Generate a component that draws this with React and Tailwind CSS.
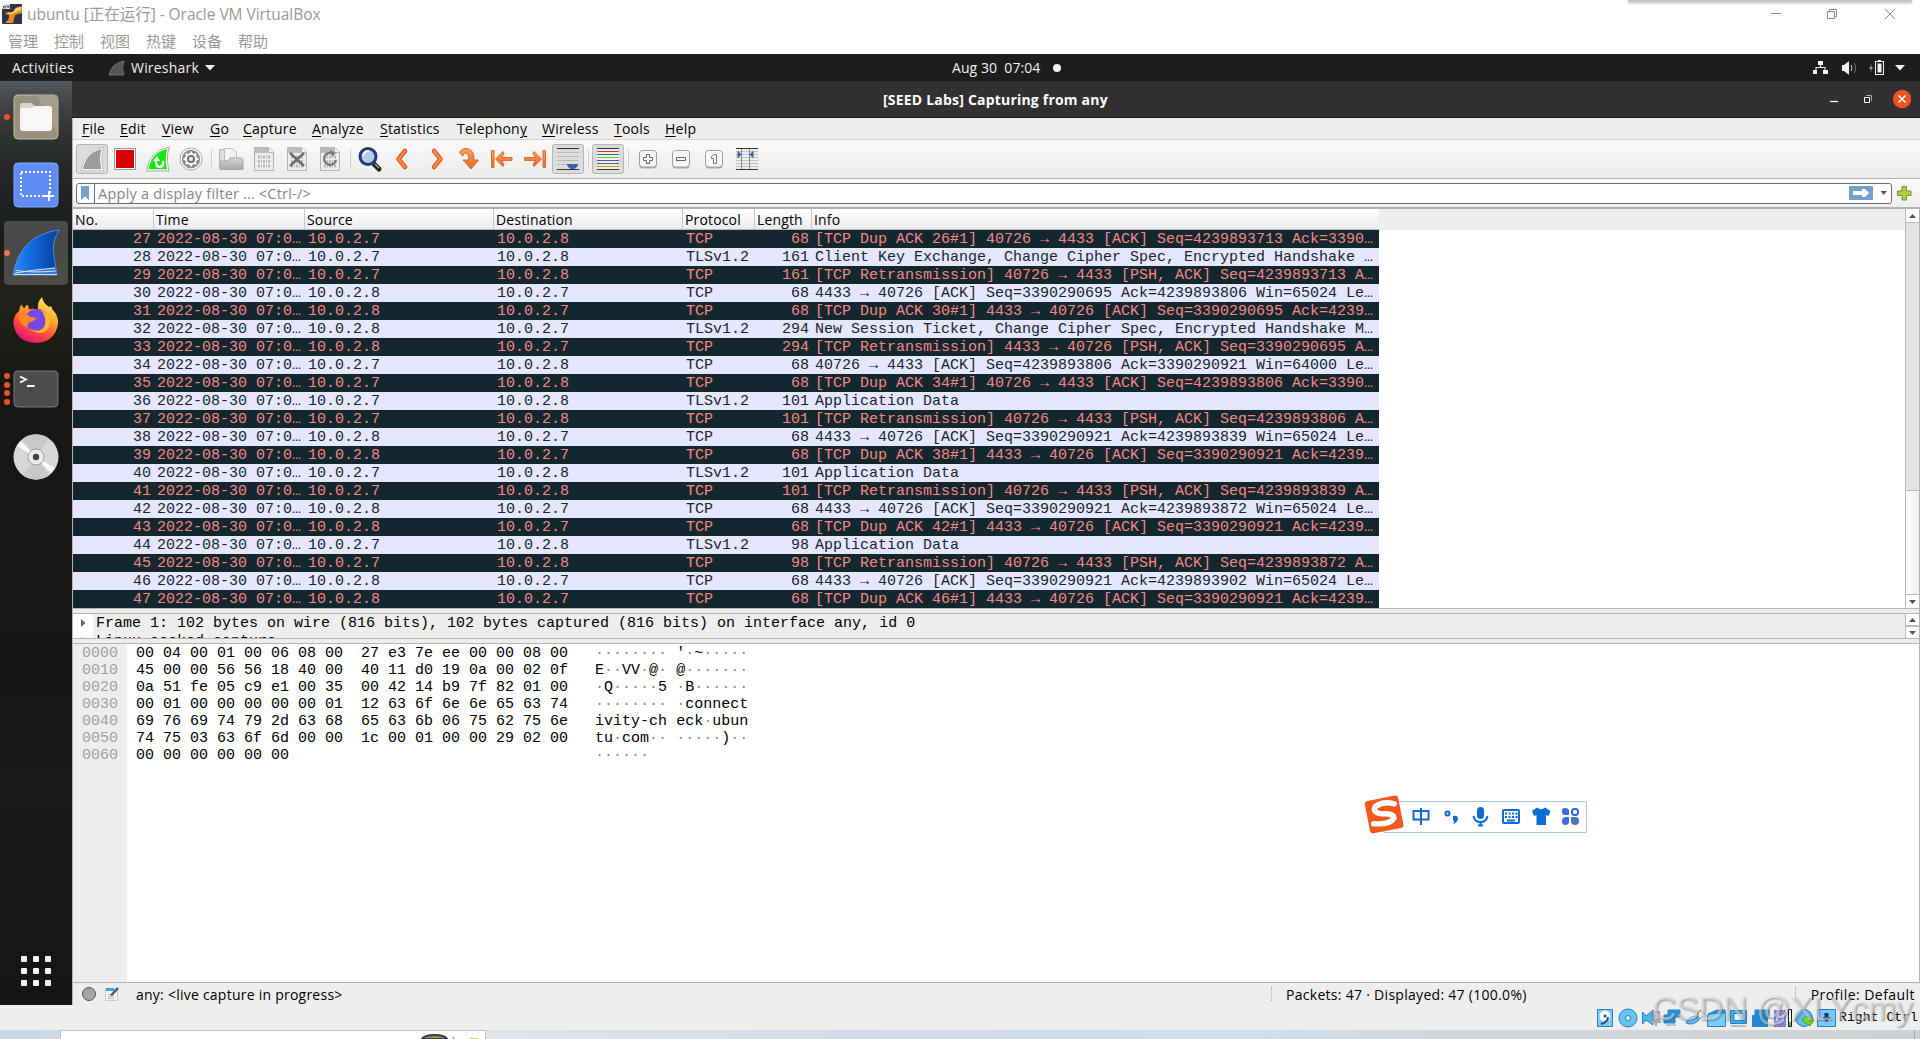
import React from 'react';

const packets = [
  [27, 7, 8, 'TCP', 68, '[TCP Dup ACK 26#1] 40726 → 4433 [ACK] Seq=4239893713 Ack=3390…'],
  [28, 7, 8, 'TLSv1.2', 161, 'Client Key Exchange, Change Cipher Spec, Encrypted Handshake …'],
  [29, 7, 8, 'TCP', 161, '[TCP Retransmission] 40726 → 4433 [PSH, ACK] Seq=4239893713 A…'],
  [30, 8, 7, 'TCP', 68, '4433 → 40726 [ACK] Seq=3390290695 Ack=4239893806 Win=65024 Le…'],
  [31, 8, 7, 'TCP', 68, '[TCP Dup ACK 30#1] 4433 → 40726 [ACK] Seq=3390290695 Ack=4239…'],
  [32, 8, 7, 'TLSv1.2', 294, 'New Session Ticket, Change Cipher Spec, Encrypted Handshake M…'],
  [33, 8, 7, 'TCP', 294, '[TCP Retransmission] 4433 → 40726 [PSH, ACK] Seq=3390290695 A…'],
  [34, 7, 8, 'TCP', 68, '40726 → 4433 [ACK] Seq=4239893806 Ack=3390290921 Win=64000 Le…'],
  [35, 7, 8, 'TCP', 68, '[TCP Dup ACK 34#1] 40726 → 4433 [ACK] Seq=4239893806 Ack=3390…'],
  [36, 7, 8, 'TLSv1.2', 101, 'Application Data'],
  [37, 7, 8, 'TCP', 101, '[TCP Retransmission] 40726 → 4433 [PSH, ACK] Seq=4239893806 A…'],
  [38, 8, 7, 'TCP', 68, '4433 → 40726 [ACK] Seq=3390290921 Ack=4239893839 Win=65024 Le…'],
  [39, 8, 7, 'TCP', 68, '[TCP Dup ACK 38#1] 4433 → 40726 [ACK] Seq=3390290921 Ack=4239…'],
  [40, 7, 8, 'TLSv1.2', 101, 'Application Data'],
  [41, 7, 8, 'TCP', 101, '[TCP Retransmission] 40726 → 4433 [PSH, ACK] Seq=4239893839 A…'],
  [42, 8, 7, 'TCP', 68, '4433 → 40726 [ACK] Seq=3390290921 Ack=4239893872 Win=65024 Le…'],
  [43, 8, 7, 'TCP', 68, '[TCP Dup ACK 42#1] 4433 → 40726 [ACK] Seq=3390290921 Ack=4239…'],
  [44, 7, 8, 'TLSv1.2', 98, 'Application Data'],
  [45, 7, 8, 'TCP', 98, '[TCP Retransmission] 40726 → 4433 [PSH, ACK] Seq=4239893872 A…'],
  [46, 8, 7, 'TCP', 68, '4433 → 40726 [ACK] Seq=3390290921 Ack=4239893902 Win=65024 Le…'],
  [47, 8, 7, 'TCP', 68, '[TCP Dup ACK 46#1] 4433 → 40726 [ACK] Seq=3390290921 Ack=4239…'],
];

const hexRows = [
  ['0000', '00 04 00 01 00 06 08 00  27 e3 7e ee 00 00 08 00', "········ '·~·····"],
  ['0010', '45 00 00 56 56 18 40 00  40 11 d0 19 0a 00 02 0f', 'E··VV·@· @·······'],
  ['0020', '0a 51 fe 05 c9 e1 00 35  00 42 14 b9 7f 82 01 00', '·Q·····5 ·B······'],
  ['0030', '00 01 00 00 00 00 00 01  12 63 6f 6e 6e 65 63 74', '········ ·connect'],
  ['0040', '69 76 69 74 79 2d 63 68  65 63 6b 06 75 62 75 6e', 'ivity-ch eck·ubun'],
  ['0050', '74 75 03 63 6f 6d 00 00  1c 00 01 00 00 29 02 00', 'tu·com·· ·····)··'],
  ['0060', '00 00 00 00 00 00', '······'],
];

// before the mnemonic, mnemonic, after it, slot width
const menus = [
  ['', 'F', 'ile', 'w-[38px]'],
  ['', 'E', 'dit', 'w-[42px]'],
  ['', 'V', 'iew', 'w-[48px]'],
  ['', 'G', 'o', 'w-[33px]'],
  ['', 'C', 'apture', 'w-[69px]'],
  ['', 'A', 'nalyze', 'w-[68px]'],
  ['', 'S', 'tatistics', 'w-[77px]'],
  ['Telephon', 'y', '', 'w-[85px]'],
  ['', 'W', 'ireless', 'w-[72px]'],
  ['', 'T', 'ools', 'w-[51px]'],
  ['', 'H', 'elp', 'w-[40px]'],
];

const ui = "font-['Open_Sans','Noto_Sans',sans-serif]";
const mono = "font-['Liberation_Mono',monospace]";
const cjk = "font-['Open_Sans','Noto_Sans_CJK_SC',sans-serif]";

function HostTitle() {
  return (
    <div className={`relative h-[54px] bg-white text-[#999] ${cjk}`}>
      <div className="absolute left-[1628px] top-0 h-[2px] w-[284px] bg-[#c4c4c4] shadow-[0_1px_3px_#aaa]" />
      <div className="flex h-7 items-center pl-[2px]">
        <svg width="20" height="20" viewBox="0 0 20 20">
          <rect width="20" height="20" rx="1" fill="#2d3446" />
          <path d="M5 8 Q11 10 13 4 L20 2 V9 L13 11 L11 19 H3 Q8 15 7 11 L3 10Z" fill="#f08a1c" />
          <path d="M6 8 Q12 10 14 4 L19 3 V6 L14 8 Q9 12 6 9Z" fill="#ffd27a" />
          <path d="M0 0 H8 V5 H0Z" fill="#e8e8e8" />
          <path d="M1.5 2 V4 H3.500 V2.500 H1.500 M5 1 V3 H7 M7 1 V4" stroke="#444" strokeWidth=".8" fill="none" />
        </svg>
        <span className="ml-[5px] whitespace-pre pt-px text-[15.5px] tracking-[-0.04px]">ubuntu [正在运行] - Oracle VM VirtualBox</span>
        <svg className="ml-auto mr-6" width="126" height="14" viewBox="0 0 126 14" fill="none" stroke="#8a8a8a">
          <path d="M1 6.500 H11" />
          <path d="M57.500 4.500 H64.500 V11.500 H57.500Z M59.500 4.500 V2.500 H66.500 V9.500 H64.500" />
          <path d="M115 2 L125 12 M125 2 L115 12" />
        </svg>
      </div>
      <div className="flex gap-4 pl-2 text-[15px] leading-[27px]">
        {['管理', '控制', '视图', '热键', '设备', '帮助'].map((m) => (
          <span key={m} className="w-[30px]">{m}</span>
        ))}
      </div>
    </div>
  );
}

function TopBar() {
  return (
    <div className={`flex h-[27px] items-center bg-[#1d1d1d] text-[14px] text-[#f0f0f0] ${ui}`}>
      <span className="w-[97px] pl-3 tracking-[0.45px]">Activities</span>
      <svg className="ml-3" width="16" height="16" viewBox="0 0 16 16">
        <path d="M0 15 Q3 3 15 1 Q12 8 15 15Z" fill="#555" stroke="#888" strokeWidth=".7" />
      </svg>
      <span className="ml-[6px] w-[74px] tracking-[0.2px]">Wireshark</span>
      <svg width="10" height="6"><path d="M0 0 H10 L5 5.500Z" fill="#f0f0f0" /></svg>
      <span className="ml-[737px] w-[101px] whitespace-pre tracking-[0.050px]">Aug 30  07:04</span>
      <span className="h-2 w-2 rounded-full bg-[#f0f0f0]" />
      <svg className="ml-auto mr-[14px]" width="94" height="16" viewBox="0 0 94 16" fill="#f0f0f0">
        <path d="M6 1 H11 V5 H9 V7 H13.500 V10 H16 V14 H11 V10 H12.500 V8 H4.500 V10 H5 V14 H1 V10 H3.500 V7 H8 V5 H6Z" />
        <path d="M30 5 H32 L37 1 V15 L32 11 H30Z" />
        <path d="M39 5 Q41 8 39 11" fill="none" stroke="#ccc" />
        <path d="M42 3 Q45.500 8 42 13" fill="none" stroke="#777" />
        <path d="M60 3 L57 9 H59 L58 13 L61 7 H59Z" fill="#999" />
        <path d="M66 0 H69 V1 H72 V15 H63 V1 H66Z M64 2 V14 H71 V2Z" fillRule="evenodd" />
        <path d="M65.500 3.500 H69.500 V12.500 H65.500Z" />
        <path d="M83 5 H93 L88 10.500Z" />
      </svg>
    </div>
  );
}

function DockItem({ dots = 0, active, children }) {
  return (
    <div className="flex h-[68px] w-[72px] items-center">
      <div className="flex w-1 flex-col gap-[2.800px] pl-1">
        {Array.from({ length: dots }, (_, i) => (
          <span key={i} className="h-[6px] w-[6px] shrink-0 rounded-full bg-[#e95420]" />
        ))}
      </div>
      <div className={`flex h-16 w-16 items-center justify-center rounded ${active ? 'bg-white/20' : ''}`}>{children}</div>
    </div>
  );
}

function Dock() {
  return (
    <div className="flex w-[72px] flex-col bg-[linear-gradient(180deg,#55585b_0px,#3c3f40_30px,#2c302e_60px,#1e2226_115px,#1a1d1a_160px,#20221a_220px,#171815_300px,#151515_600px,#1a1918_700px,#151515_924px)] pt-[2px]">
      <DockItem dots={1}>
        <svg width="46" height="46" viewBox="0 0 46 46">
          <rect x="1" y="1" width="44" height="44" rx="4" fill="#99907c" stroke="#c9c2b2" />
          <path d="M24 1 H41 Q45 1 45 5 V41Z" fill="#a69e8a" />
          <path d="M7 11 Q7 9 9 9 H18 L22 12 H36 Q39 12 39 15 V20 H7Z" fill="#d8d4ca" />
          <path d="M7 17 Q7 14 10 14 H18 L22 12 H36 Q39 12 39 15 V34 Q39 37 36 37 H10 Q7 37 7 34Z" fill="#f8f7f5" />
        </svg>
      </DockItem>
      <DockItem>
        <svg width="46" height="46" viewBox="0 0 46 46">
          <rect x="1" y="1" width="44" height="44" rx="4" fill="#5f8df5" stroke="#83a8fa" />
          <path d="M8 10 H37 V31 M31 34 H8 V10" fill="none" stroke="#fff" strokeWidth="2" strokeDasharray="2 2" />
          <path d="M31 34 H41 M36 29 V39" stroke="#fff" strokeWidth="2" />
        </svg>
      </DockItem>
      <DockItem dots={1} active>
        <svg width="48" height="48" viewBox="0 0 48 48">
          <defs>
            <linearGradient id="fin" x1="0" y1="0" x2="1" y2="0">
              <stop offset="0" stopColor="#2c8af4" /><stop offset=".55" stopColor="#0d5fd2" /><stop offset="1" stopColor="#0a3a94" />
            </linearGradient>
          </defs>
          <path d="M1 46 Q8 6 47 1 Q39 14 42 27 L45 46Z" fill="url(#fin)" stroke="#4aa0f5" strokeWidth=".8" />
          <path d="M1 46 L4 41 Q22 43 43 38 L45 46Z" fill="#3a78d0" />
          <path d="M3 44 Q20 41 43 39 M4 41.500 Q20 44 44 42 M2 45.500 H45" stroke="#cfe2fa" fill="none" />
        </svg>
      </DockItem>
      <DockItem>
        <svg className="-mt-[2px]" width="48" height="48" viewBox="0 0 48 48">
          <defs>
            <linearGradient id="fox" x1=".8" y1="0" x2=".3" y2="1">
              <stop offset="0" stopColor="#fff36a" /><stop offset=".35" stopColor="#ffb02c" />
              <stop offset=".7" stopColor="#ff4a3a" /><stop offset="1" stopColor="#e01080" />
            </linearGradient>
          </defs>
          <path d="M7 15 Q7 11 10 8 Q10 12 13 12 Q13 9 16 9 L17 13 Q22 12 26 14 Q25 6 30 1 Q31 7 37 11 Q40 9 40 13 Q47 20 46 28 Q43 46 24 47 Q4 46 1.500 28 Q1 20 7 15Z" fill="url(#fox)" />
          <circle cx="24.500" cy="24" r="11" fill="#7a48e0" />
          <path d="M15 14 Q22 11 30 15 L36 20 Q34 15 28 13Z" fill="#b848d8" />
          <path d="M6 19 Q13 16 19 21 L24 22 Q23 25 18 26 Q14 28 16 32 Q6 28 6 19Z" fill="#ff8a22" />
          <path d="M29 14 Q41 19 37 31 Q31 42 17 33 Q29 38 33 29 Q35 22 29 14Z" fill="#ffb52e" />
        </svg>
      </DockItem>
      <DockItem dots={4}>
        <svg width="46" height="38" viewBox="0 0 46 38">
          <rect x="1" y="1" width="44" height="36" rx="4" fill="#4c4c4c" stroke="#787878" />
          <path d="M7 6.500 L13 9.500 L7 12.500 M14 16 H21.500" fill="none" stroke="#fff" strokeWidth="1.800" />
        </svg>
      </DockItem>
      <DockItem>
        <svg width="46" height="46" viewBox="0 0 46 46">
          <circle cx="23" cy="23" r="22.500" fill="#d7d7d7" />
          <path d="M23 23 L10 4.500 A22.500 22.500 0 0 1 36 4.500Z M23 23 L10 41.500 A22.500 22.500 0 0 0 36 41.500Z" fill="#c8c8c8" />
          <path d="M23 23 L4 12 L8 7Z M23 23 L42 34 L38 39Z" fill="#fff" />
          <circle cx="23" cy="23" r="8" fill="#ececec" stroke="#aaa08c" />
          <circle cx="23" cy="23" r="3.200" fill="#444" />
        </svg>
      </DockItem>
      <div className="mb-[19px] ml-[21px] mt-auto grid w-[30px] grid-cols-3 gap-[6px]">
        {Array.from({ length: 9 }, (_, i) => <span key={i} className="h-[6px] w-[6px] rounded-[1px] bg-[#f2f2f2]" />)}
      </div>
    </div>
  );
}

function Tool({ pressed, children }) {
  return (
    <div className="h-8 w-[33px] shrink-0">
      <svg width="32" height="32" viewBox="0 0 32 32" fill="none">
        {pressed && <rect x=".5" y="1.500" width="31" height="29" rx="2" fill="#dcdcdc" stroke="#b4b4b4" />}
        {children}
      </svg>
    </div>
  );
}

const Sep = () => <div className="mx-[3px] h-5 w-px shrink-0 bg-[#d0d0d0]" />;

function DocPage({ children }) {
  return (
    <>
      <path d="M6.500 4.500 H21 L25.500 9 V27.500 H6.500Z" fill="#ecece9" stroke="#b4b4b4" />
      <path d="M7 5 H20 V10 H7Z" fill="#bcbcbc" />
      <path d="M20.500 4.500 V9.500 H25.500" fill="#f4f4f4" stroke="#b4b4b4" />
      <path d="M10 14 H22 M10 18.500 H22 M10 23 H22" stroke="#b8b8b8" strokeWidth="2.800" strokeDasharray="2 1 1 1" />
      {children}
    </>
  );
}

function ZoomKey({ children }) {
  return (
    <>
      <rect x="7.500" y="8" width="17" height="17.500" rx="3" fill="#aaa" />
      <rect x="7.500" y="7.500" width="17" height="16.500" rx="3" fill="#f8f8f8" stroke="#a0a0a0" />
      {children}
    </>
  );
}

function Toolbar() {
  return (
    <div className="flex h-[39px] items-center border-b border-[#b4b4b4] bg-gradient-to-b from-[#fafafa] to-[#ececec] pl-[3px]">
      <svg width="0" height="0" className="absolute">
        <defs>
          <linearGradient id="orange" x1="0" y1="0" x2="0" y2="1">
            <stop offset="0" stopColor="#f5a55c" /><stop offset="1" stopColor="#f0641e" />
          </linearGradient>
          <linearGradient id="folder" x1="0" y1="0" x2="0" y2="1">
            <stop offset="0" stopColor="#d6d6d6" /><stop offset="1" stopColor="#a8a8a8" />
          </linearGradient>
        </defs>
      </svg>
      <Tool pressed>
        <path d="M6 27 Q9 8 27 5 Q23 14 26.500 27Z" fill="#9c9c9c" stroke="#fff" strokeWidth="1.600" />
        <path d="M5 28 Q8 7 28 4 Q24 14 27.500 28Z" stroke="#c0c0c0" />
      </Tool>
      <Tool>
        <rect x="5.500" y="5.500" width="21" height="21" fill="#fff" stroke="#999" />
        <rect x="7" y="7" width="18" height="18" fill="#d90000" />
      </Tool>
      <Tool>
        <path d="M5.500 27 Q8.500 8 26.500 5 Q23 14 26 27Z" fill="#17e80a" stroke="#fff" strokeWidth="1.600" />
        <path d="M4.500 28 Q7.500 7 27.500 4 Q23.500 14 27 28Z" stroke="#aaa" />
        <path d="M15 15 L14 19 Q14 24 18 24 Q22 23 21 18" stroke="#fff" strokeWidth="2.400" />
        <path d="M11 18 L15 13 L18 18Z" fill="#fff" />
      </Tool>
      <Tool>
        <circle cx="16" cy="16" r="11" fill="#fff" stroke="#aaa" />
        <circle cx="16" cy="16" r="9.200" fill="#8c8c8c" />
        <circle cx="16" cy="16" r="5" stroke="#fff" strokeWidth="2.200" />
        <path d="M16 8.500 V12 M16 20 V23.500 M8.500 16 H12 M20 16 H23.500 M10.700 10.700 L13 13 M19 19 L21.300 21.300 M10.700 21.300 L13 19 M19 13 L21.300 10.700" stroke="#fff" strokeWidth="1.800" />
        <circle cx="16" cy="16" r="4" fill="#777" />
        <circle cx="16" cy="16" r="2" fill="#eee" />
      </Tool>
      <Sep />
      <Tool>
        <path d="M4.500 25 V6.500 H11 L13 9" fill="#ddd" stroke="#b4b4b4" />
        <path d="M9.500 18 V5.500 H17 L21.500 9 V18Z" fill="#f4f4f4" stroke="#c0c0c0" />
        <path d="M5 26.500 V20 Q5 18 7 18 H13 L15 15 H26 Q28 15 28 17 V26.500Z" fill="url(#folder)" stroke="#a8a8a8" />
      </Tool>
      <Tool><DocPage /></Tool>
      <Tool><DocPage><path d="M9 10 L23 23 M23 10 L9 23" stroke="#6c6c6c" strokeWidth="2.400" /></DocPage></Tool>
      <Tool>
        <DocPage>
          <path d="M19 10.500 A6 6 0 1 0 22 17" stroke="#7c7c7c" strokeWidth="2.400" />
          <path d="M16 7 L22 10 L18 14Z" fill="#7c7c7c" />
        </DocPage>
      </Tool>
      <Sep />
      <Tool>
        <path d="M19 20 L25 26" stroke="#222" strokeWidth="5" strokeLinecap="round" />
        <path d="M21 21 L25 25" stroke="#999" strokeWidth="1.500" />
        <circle cx="14" cy="13.500" r="8" fill="#b9c8e8" stroke="#1e3c7c" strokeWidth="3" />
        <path d="M9 13 Q10 8 15 8" stroke="#f0f5ff" strokeWidth="2" />
      </Tool>
      <Tool><path d="M18 8 L11.500 16 L18 24" stroke="#d9531e" strokeWidth="4.500" strokeLinecap="round" strokeLinejoin="round" /><path d="M18 8 L11.500 16 L18 24" stroke="#f58a48" strokeWidth="2.500" strokeLinecap="round" /></Tool>
      <Tool><path d="M14 8 L20.500 16 L14 24" stroke="#d9531e" strokeWidth="4.500" strokeLinecap="round" strokeLinejoin="round" /><path d="M14 8 L20.500 16 L14 24" stroke="#f58a48" strokeWidth="2.500" strokeLinecap="round" /></Tool>
      <Tool><path d="M6.500 10 Q8 5.500 13 5.500 Q21.500 6 21 17 H25.500 L18 26 L10 17 H15.500 Q16 10 12 10 Q10 10 10 13Z" fill="url(#orange)" stroke="#df6a2c" /></Tool>
      <Tool><path d="M5.500 7.500 H8 V24.500 H5.500Z M9.500 16 L17 8.500 L18 10.500 L15.500 14.500 H26 V17.500 H15.500 L18 21.500 L17 23.500Z" fill="url(#orange)" stroke="#e06c2c" /></Tool>
      <Tool><path d="M26.500 7.500 H24 V24.500 H26.500Z M22.500 16 L15 8.500 L14 10.500 L16.500 14.500 H5.500 V17.500 H16.500 L14 21.500 L15 23.500Z" fill="url(#orange)" stroke="#e06c2c" /></Tool>
      <Tool pressed>
        <path d="M5 9.500 H27 M5 13.500 H27 M5 17.500 H27 M5 21.500 H27" stroke="#b9bbb6" />
        <path d="M5 5.500 H27 M5 26.500 H27" stroke="#2e3436" />
        <path d="M15 21 H26 Q26 24 22 26 H19 Q15 24 15 21Z" fill="#3465a4" />
      </Tool>
      <Sep />
      <Tool pressed>
        <path d="M5 5 H27 V27 H5Z" fill="#eee" />
        <path d="M5 5.500 H27 M5 26.500 H27" stroke="#2e3436" />
        <path d="M5 8.500 H27" stroke="#ef2929" /><path d="M5 11.500 H27" stroke="#3465a4" /><path d="M5 14.500 H27" stroke="#73d216" />
        <path d="M5 17.500 H27" stroke="#3465a4" /><path d="M5 20.500 H27" stroke="#75507b" /><path d="M5 23.500 H27" stroke="#c4a000" />
      </Tool>
      <Sep />
      <Tool><ZoomKey><path d="M14.500 11.500 H17.500 V14.500 H20.500 V17.500 H17.500 V20.500 H14.500 V17.500 H11.500 V14.500 H14.500Z" fill="#fff" stroke="#666" /></ZoomKey></Tool>
      <Tool><ZoomKey><path d="M11.500 14.500 H20.500 V17.500 H11.500Z" fill="#fff" stroke="#666" /></ZoomKey></Tool>
      <Tool><ZoomKey><path d="M13.500 13.500 L16 11.500 H18.500 V20.500 H15.500 V15.500 H13.500Z" fill="#fff" stroke="#777" /></ZoomKey></Tool>
      <Tool>
        <path d="M5 5 H27 V27 H5Z" fill="#efefed" />
        <path d="M5 8.500 H27 M5 11.500 H27 M5 14.500 H27 M5 17.500 H27 M5 20.500 H27 M5 23.500 H27" stroke="#c0c1bd" />
        <path d="M5 5.500 H27 M5 26.500 H27" stroke="#2e3436" />
        <path d="M10.500 6 V26 M18.500 6 V26" stroke="#888a85" />
        <path d="M7 8.500 L10 11.500 L7 14.500Z M22 8.500 V14.500 L19 11.500Z" fill="#3465a4" stroke="#3465a4" />
      </Tool>
    </div>
  );
}

function FilterBar() {
  return (
    <div className="flex h-[30px] items-center border-b-2 border-[#b2b2b2] bg-gradient-to-b from-[#fbfbfb] to-[#efefef] pl-[3px]">
      <div className="flex h-[21px] w-[1816px] items-center rounded-[3px] border border-[#6f6f6f] bg-white">
        <svg className="ml-1" width="9" height="15"><path d="M0 0 H8 V14 L4 10.500 L0 14Z" fill="#729fcf" /></svg>
        <span className="ml-1 h-full w-px bg-[#6f6f6f]" />
        <span className="ml-[3px] whitespace-nowrap text-[14.500px] leading-[19px] tracking-[0.24px] text-[#868686]">Apply a display filter … &lt;Ctrl-/&gt;</span>
        <svg className="ml-auto mr-[2px]" width="40" height="14" viewBox="0 0 40 14">
          <rect width="24" height="14" rx="1" fill="#729fcf" />
          <path d="M4 5 H13 V3 H16 L20 7 L16 11 H13 V9 H4Z" fill="#fff" />
          <path d="M31.500 5 H38 L34.700 9Z" fill="#555" />
        </svg>
      </div>
      <svg className="ml-[5px]" width="15" height="15"><path d="M5 .5 H9.500 V5 H14 V9.500 H9.500 V14 H5 V9.500 H.5 V5 H5Z" fill="#a8d04a" stroke="#6f9c28" /></svg>
    </div>
  );
}

function Arrow({ up }) {
  return (
    <svg width="7" height="4"><path d={up ? 'M0 4 H7 L3.500 0Z' : 'M0 0 H7 L3.500 4Z'} fill="#555" /></svg>
  );
}

const headers = [
  ['No.', 'w-[81px] pl-[2px]'],
  ['Time', 'w-[151px] pl-[2px]'],
  ['Source', 'w-[189px] pl-[2px]'],
  ['Destination', 'w-[189px] pl-[2px]'],
  ['Protocol', 'w-[72px] pl-[2px]'],
  ['Length', 'w-[57px] pl-[2px]'],
];

function PacketList() {
  return (
    <div className="flex h-[400px] border-b border-[#b4b4b4] bg-white">
      <div className="flex-1">
        <div className="flex h-[21px] bg-[#eee] text-[14px] leading-[21px] tracking-[0.15px] text-black">
          <div className="flex w-[1306px] border-b border-[#b9b9b9] bg-gradient-to-b from-white to-[#ebebeb]">
            {headers.map(([label, cls]) => (
              <span key={label} className={`border-r border-[#c8c8c8] ${cls}`}>{label}</span>
            ))}
            <span className="pl-[2px]">Info</span>
          </div>
        </div>
        <div className={`w-[1306px] text-[15px] leading-[20px] ${mono}`}>
          {packets.map(([no, src, dst, proto, len, info]) => {
            const bad = info.startsWith('[TCP');
            return (
              <div key={no} className={`flex h-[18px] whitespace-pre ${bad ? 'bg-[#12272e] text-[#f78787]' : 'bg-[#e7e6ff] text-[#12272e]'}`}>
                <span className="w-[78px] text-right">{no}</span>
                <span className="w-[157px] pl-[6px]">2022-08-30 07:0…</span>
                <span className="w-[189px]">10.0.2.{src}</span>
                <span className="w-[189px]">10.0.2.{dst}</span>
                <span className="w-[73px]">{proto}</span>
                <span className="w-[50px] text-right">{len}</span>
                <span className="pl-[6px]">{info}</span>
              </div>
            );
          })}
        </div>
      </div>
      <div className="flex w-[14px] flex-col border-l border-[#b9b9b9]">
        <div className="flex h-[14px] items-center justify-center border-b border-[#b9b9b9] bg-white"><Arrow up /></div>
        <div className="h-[268px] border-b border-[#b9b9b9] bg-[#e4e4e4]" />
        <div className="flex-1 bg-gradient-to-r from-white to-[#f0f0f0]" />
        <div className="flex h-[14px] items-center justify-center border-t border-[#b9b9b9] bg-white"><Arrow /></div>
      </div>
    </div>
  );
}

function Details() {
  return (
    <div className={`mt-1 flex h-[26px] overflow-hidden border-y border-[#b4b4b4] bg-[#eee] text-[15px] text-black ${mono}`}>
      <div className="w-5 bg-white pl-2 pt-[5px]">
        <svg width="5" height="20"><path d="M0 0 L4.500 4 L0 8Z M0 18 L4 22 H0Z" fill="#666" /></svg>
      </div>
      <div className="flex-1 whitespace-pre pl-[3px] pt-px leading-[18px]">
        <div>Frame 1: 102 bytes on wire (816 bits), 102 bytes captured (816 bits) on interface any, id 0</div>
        <div>Linux cooked capture</div>
      </div>
      <div className="flex w-[14px] flex-col border-l border-[#b9b9b9] bg-white">
        <div className="flex h-[13px] items-center justify-center border-b-2 border-[#b9b9b9]"><Arrow up /></div>
        <div className="flex h-[11px] items-center justify-center"><Arrow /></div>
      </div>
    </div>
  );
}

function HexPane() {
  return (
    <div className={`mt-1 flex h-[340px] border-y border-[#b4b4b4] bg-white text-[15px] leading-[17px] text-black ${mono}`}>
      <div className="w-[54px] bg-[#eee] pl-[9px] pt-px text-[#a0a0a0]">
        {hexRows.map(([off]) => <div key={off}>{off}</div>)}
      </div>
      <div className="w-[459px] whitespace-pre pl-[9px] pt-px">
        {hexRows.map(([off, bytes]) => <div key={off}>{bytes}</div>)}
      </div>
      <div className="whitespace-pre pl-[9px] pt-px">
        {hexRows.map(([off, , ascii]) => (
          <div key={off}>
            {ascii.split('').map((c, i) => <span key={i} className={c === '·' ? 'text-[#8c8c8c]' : ''}>{c}</span>)}
          </div>
        ))}
      </div>
    </div>
  );
}

function StatusBar() {
  return (
    <div className="flex h-[22px] items-center bg-[#eee] text-[14px] text-black">
      <svg className="ml-[9px]" width="38" height="16" viewBox="0 0 38 16">
        <circle cx="7" cy="8" r="6.500" fill="#a3a5a0" stroke="#555" />
        <path d="M23.500 2.500 H35.500 V14.500 H23.500Z" fill="#f4f4f0" stroke="#ccc" />
        <path d="M24 2 H32 V5 H24Z" fill="#3aa4dc" />
        <path d="M26 8.500 H32 M26 10.500 H32 M26 12.500 H32" stroke="#bbb" />
        <path d="M29 9.500 L36 2" stroke="#555" strokeWidth="2.500" />
      </svg>
      <span className="ml-4 w-[1135px] tracking-[0.24px]">any: &lt;live capture in progress&gt;</span>
      <span className="h-[14px] border-l border-dotted border-[#aaa]" />
      <span className="ml-[14px] w-[509px] tracking-[0.29px]">Packets: 47 · Displayed: 47 (100.0%)</span>
      <span className="h-[14px] border-l border-dotted border-[#aaa]" />
      <span className="ml-auto mr-[5px] tracking-[0.45px]">Profile: Default</span>
    </div>
  );
}

function WiresharkWindow() {
  return (
    <div className={`flex w-[1848px] flex-col ${ui}`}>
      <div className="flex h-[37px] items-center border-b border-[#1c1a1a] bg-[#333031] text-white">
        <span className="ml-[811px] whitespace-nowrap text-[14px] font-bold tracking-[0.2px]">[SEED Labs] Capturing from any</span>
        <svg className="ml-auto mr-[9px]" width="83" height="20" viewBox="0 0 83 20" fill="none" stroke="#fff">
          <path d="M2 12.500 H10" strokeWidth="1.200" />
          <path d="M36.500 8.500 H41.500 V13.500 H36.500Z" />
          <path d="M38 6.500 H43.500 V12" stroke="#aaa" />
          <circle cx="74" cy="10" r="9.200" fill="#e95420" stroke="none" />
          <path d="M70.500 6.500 L77.500 13.500 M77.500 6.500 L70.500 13.500" strokeWidth="1.500" />
        </svg>
      </div>
      <div className="flex-1 border-l border-[#b4b4b4] bg-[#eee]">
        <div className="flex h-[22px] border-b border-[#d4d4d4] pl-[9px] text-[14px] leading-[21px] tracking-[0.22px] text-black">
          {menus.map(([pre, key, post, w]) => (
            <span key={key} className={`whitespace-nowrap ${w}`}>
              {pre}<span className="underline underline-offset-2">{key}</span>{post}
            </span>
          ))}
        </div>
        <Toolbar />
        <FilterBar />
        <div className="border-r border-[#b4b4b4]">
          <PacketList />
          <Details />
          <HexPane />
        </div>
        <StatusBar />
      </div>
    </div>
  );
}

function HostStatus() {
  return (
    <div className="flex h-[25px] items-center bg-[#efefef]">
      <svg className="ml-[1596px]" width="241" height="20" viewBox="0 0 241 20" stroke="#2c7fc0">
        <path d="M1.500 1.500 H16.500 V18.500 H1.500Z" fill="#7fc8f5" />
        <circle cx="9" cy="8" r="5.500" fill="#f4f9ff" stroke="none" />
        <circle cx="9" cy="8" r="1.500" fill="#1c4c94" stroke="none" />
        <path d="M12 9 Q12 14 5 16" fill="none" stroke="#1c4c94" strokeWidth="2" />
        <circle cx="32" cy="10" r="9" fill="#62c4f8" /><circle cx="32" cy="10" r="2.500" fill="#fff" />
        <path d="M46.500 4 L50 8 L57 2 V17 L50 12 L46.500 16Z" fill="#4cb4f0" />
        <path d="M58 4 H63 V12 H58Z M55 14 H65 M60 14 V18" fill="#ccc" stroke="#aaa" strokeWidth="2" />
        <path d="M68 7 H79 V15 H68Z M72 2 H84 V9 H72Z" fill="#2494e0" /><path d="M70 17 H80" stroke="#999" />
        <path d="M90 15 Q92 9 100 8 L103 12 Q97 18 90 15Z" fill="#64c0f4" /><path d="M101 7 L104 2 L109 6 L104 11Z" fill="#eee" stroke="#777" />
        <path d="M111.500 7 L118 4 H129.500 V18.500 H111.500Z" fill="#74d0fc" /><path d="M112 6 L121 2 H129 V5Z" fill="#2a94dc" />
        <path d="M134.500 2.500 H150.500 V15.500 H134.500Z" fill="#38aef2" /><path d="M138 5.500 H147 V12.500 H138Z" fill="#e8f6ff" /><path d="M135 18 H150" stroke="#888" />
        <path d="M156.500 7.500 H171.500 V18.500 H156.500Z M159 2 H173 V10 H159Z" fill="#2088d4" />
        <path d="M178.500 2.500 H189.500 V18.500 H178.500Z" fill="#8c8ce0" stroke="#5c5cb4" strokeDasharray="2 1" />
        <path d="M181 13 V7 L184 10 L187 7 V13" fill="none" stroke="#fff" />
        <path d="M192.500 1.500 H195.500 V18.500 H192.500Z" fill="#fff" stroke="#111" /><path d="M194 14 V18" stroke="#44dd22" strokeWidth="2" />
        <circle cx="208" cy="10" r="8.500" fill="#58bcf4" /><path d="M206 12 L214 18 L218 12 L211 8Z" fill="#74d820" stroke="#4aa010" />
        <path d="M221.500 1.500 H239.500 V18.500 H221.500Z" fill="#74ccfa" /><path d="M228.500 5 H232.500 V9 H235 L230.500 14 L226 9 H228.500Z" fill="#123a70" stroke="none" />
      </svg>
      <span className="ml-[2px] whitespace-nowrap pt-px font-['Liberation_Mono',monospace] text-[13px] tracking-[0.1px] text-black">Right Ctrl</span>
    </div>
  );
}

function Taskbar() {
  return (
    <div className="flex h-[9px] overflow-hidden bg-[linear-gradient(90deg,#cbd8e4_0,#dfe3ec_500px,#d2dbe6_900px,#cfe0ec_1250px,#d3d6da_1450px,#cfd2d5_1920px)]">
      <div className="ml-[60px] flex w-[426px] justify-end border border-b-0 border-[#c4c4c4] bg-white">
        <svg className="mr-1" width="60" height="8" viewBox="0 0 60 8">
          <path d="M1 8 Q3 4 14 4 Q24 4 26 8Z" fill="#8f9c3c" stroke="#47305c" strokeWidth="2" />
          <path d="M31 8 L32 5 L34 8Z" fill="#ee82ee" /><path d="M49 7.500 H57" stroke="#f0c838" />
        </svg>
      </div>
      <span className={`ml-[1303px] mt-[3px] text-[15px] leading-5 text-black ${ui}`}>19:04</span>
      <span className="ml-auto mr-[5px] h-full w-px bg-[#aaa]" />
    </div>
  );
}

function ImeBar() {
  return (
    <svg className="absolute left-[1363px] top-[793px]" width="226" height="44" viewBox="0 0 226 44">
      <rect x="20.500" y="8.500" width="203" height="31" rx="1.500" fill="#fff" stroke="#aac4e4" />
      <g transform="rotate(-11 21 21)">
        <rect x="4" y="5" width="34" height="33" rx="3" fill="#f4581f" />
        <path d="M33 13 Q23 8 14 12 Q9 17 19 20.500 Q31 22 30 27 Q25 33 9 28.500" fill="none" stroke="#fff" strokeWidth="5.500" strokeLinecap="round" />
      </g>
      <g fill="none" stroke="#0a6cd6" strokeWidth="2">
        <path d="M50.500 18 H65.500 V26.500 H50.500Z M58 15 V32" />
        <circle cx="84.500" cy="20.500" r="2" />
        <path d="M110.500 23 Q111.500 29 117.500 29 Q123.500 29 124.500 23 M117.500 29 V33" />
        <path d="M115 32.500 H120" />
        <rect x="140" y="17" width="16" height="13" rx="1" />
        <path d="M142 20.500 H155 M142 24 H155" strokeDasharray="2 1.500" />
        <path d="M144 27.500 H152" />
      </g>
      <g fill="#0a6cd6">
        <path d="M90 23 Q95 22 95 26 Q94 30 90 31 Q92 28 90 27Z" />
        <rect x="114" y="14" width="7" height="12" rx="3.500" />
        <path d="M169 18 L174 14.500 Q178 18 182 14.500 L187.500 18 L185.500 23 L183 22 V32 H173.500 V22 L171 23Z" />
        <path d="M199 17 Q199 15 202 15 Q206 15 206 18 V22 H202 Q199 22 199 19Z M199 28 Q199 24 203 24 H206 V29 Q206 32 202 32 Q199 32 199 28Z" fill="#3b6ee0" />
        <path d="M208 24 H213 Q216 24 216 28 Q216 32 212 32 Q208 32 208 28Z" fill="#4e74b4" />
      </g>
      <rect x="209" y="16" width="6" height="6" rx="2.500" fill="none" stroke="#2d68e8" strokeWidth="2" />
    </svg>
  );
}

function App() {
  return (
    <div className="relative h-[1039px] w-[1920px] overflow-hidden">
      <HostTitle />
      <TopBar />
      <div className="flex h-[924px]">
        <Dock />
        <WiresharkWindow />
      </div>
      <HostStatus />
      <Taskbar />
      <ImeBar />
      <div className="absolute left-[1652px] top-[988px] whitespace-nowrap font-['Liberation_Sans',sans-serif] text-[34px] leading-[40px] tracking-[-0.3px] text-white/45 [text-shadow:1px_1px_2px_rgba(90,90,90,0.6)]">CSDN @XLYcmy</div>
    </div>
  );
}

export default App;
